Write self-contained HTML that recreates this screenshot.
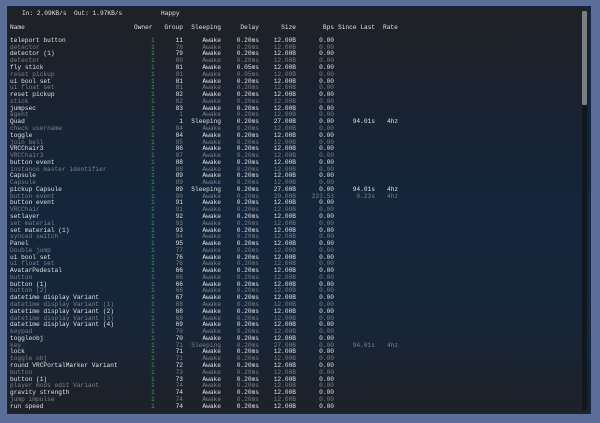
<!DOCTYPE html>
<html><head><meta charset="utf-8"><style>
html,body{margin:0;padding:0}
body{width:600px;height:423px;background:#5b6e98;position:relative;overflow:hidden;font-family:"Liberation Mono",monospace;font-size:6.2px}
.p{position:absolute;left:7px;top:6px;width:584px;height:408px;border:1px solid #0f2a46;box-sizing:border-box;background:linear-gradient(#1f2124 0%,#1a2230 20%,#13263b 50%,#17263a 75%,#1d2128 100%)}
.sb{position:absolute;left:582px;top:11px;width:5px;height:399px;background:#12171e;border-radius:2px}
.th{position:absolute;left:582px;top:11px;width:5px;height:94px;background:#7a7c80;border-radius:1px}
.r{position:absolute;left:0;width:600px;height:7px;line-height:7px;white-space:pre;color:#7b8088}
.b{color:#dfe1e4}
.r span{position:absolute;top:0}
.n{left:10px}
.o{left:151px;color:#3aa03a!important}
.g{right:417px}
.s{right:379px}
.d{right:341px}
.z{right:304px}
.bp{right:266px}
.sl{right:225px}
.rt{left:387px}
.h{color:#dfe1e4}
</style></head><body>
<div class="p"></div>
<div class="sb"></div><div class="th"></div>
<div class="r h" style="top:10px"><span style="left:22px">In: 2.09KB/s  Out: 1.97KB/s</span><span style="left:161px">Happy</span></div>
<div class="r h" style="top:24px"><span class="n">Name</span><span style="left:134px">Owner</span><span class="g">Group</span><span class="s">Sleeping</span><span class="d">Delay</span><span class="z">Size</span><span class="bp">Bps</span><span style="left:338px">Since Last</span><span style="left:383px">Rate</span></div>
<div class="r b" style="top:37px"><span class="n">teleport button</span><span class="o">1</span><span class="g">11</span><span class="s">Awake</span><span class="d">0.20ms</span><span class="z">12.00B</span><span class="bp">0.00</span></div>
<div class="r" style="top:44px"><span class="n">detector</span><span class="o">1</span><span class="g">78</span><span class="s">Awake</span><span class="d">0.20ms</span><span class="z">12.00B</span><span class="bp">0.00</span></div>
<div class="r b" style="top:50px"><span class="n">detector (1)</span><span class="o">1</span><span class="g">79</span><span class="s">Awake</span><span class="d">0.20ms</span><span class="z">12.00B</span><span class="bp">0.00</span></div>
<div class="r" style="top:57px"><span class="n">detector</span><span class="o">1</span><span class="g">80</span><span class="s">Awake</span><span class="d">0.20ms</span><span class="z">12.00B</span><span class="bp">0.00</span></div>
<div class="r b" style="top:64px"><span class="n">fly stick</span><span class="o">1</span><span class="g">81</span><span class="s">Awake</span><span class="d">0.05ms</span><span class="z">12.00B</span><span class="bp">0.00</span></div>
<div class="r" style="top:71px"><span class="n">reset pickup</span><span class="o">1</span><span class="g">81</span><span class="s">Awake</span><span class="d">0.05ms</span><span class="z">12.00B</span><span class="bp">0.00</span></div>
<div class="r b" style="top:78px"><span class="n">ui bool set</span><span class="o">1</span><span class="g">81</span><span class="s">Awake</span><span class="d">0.20ms</span><span class="z">12.00B</span><span class="bp">0.00</span></div>
<div class="r" style="top:84px"><span class="n">ui float set</span><span class="o">1</span><span class="g">81</span><span class="s">Awake</span><span class="d">0.20ms</span><span class="z">12.00B</span><span class="bp">0.00</span></div>
<div class="r b" style="top:91px"><span class="n">reset pickup</span><span class="o">1</span><span class="g">82</span><span class="s">Awake</span><span class="d">0.20ms</span><span class="z">12.00B</span><span class="bp">0.00</span></div>
<div class="r" style="top:98px"><span class="n">stick</span><span class="o">1</span><span class="g">82</span><span class="s">Awake</span><span class="d">0.20ms</span><span class="z">12.00B</span><span class="bp">0.00</span></div>
<div class="r b" style="top:105px"><span class="n">jumpsec</span><span class="o">1</span><span class="g">83</span><span class="s">Awake</span><span class="d">0.20ms</span><span class="z">12.00B</span><span class="bp">0.00</span></div>
<div class="r" style="top:111px"><span class="n">agent</span><span class="o">1</span><span class="g">1</span><span class="s">Awake</span><span class="d">0.20ms</span><span class="z">12.00B</span><span class="bp">0.00</span></div>
<div class="r b" style="top:118px"><span class="n">Quad</span><span class="o">1</span><span class="g">1</span><span class="s">Sleeping</span><span class="d">0.20ms</span><span class="z">27.00B</span><span class="bp">0.00</span><span class="sl">94.01s</span><span class="rt">4hz</span></div>
<div class="r" style="top:125px"><span class="n">check username</span><span class="o">1</span><span class="g">84</span><span class="s">Awake</span><span class="d">0.20ms</span><span class="z">12.00B</span><span class="bp">0.00</span></div>
<div class="r b" style="top:132px"><span class="n">toggle</span><span class="o">1</span><span class="g">84</span><span class="s">Awake</span><span class="d">0.20ms</span><span class="z">12.00B</span><span class="bp">0.00</span></div>
<div class="r" style="top:139px"><span class="n">join bell</span><span class="o">1</span><span class="g">85</span><span class="s">Awake</span><span class="d">0.20ms</span><span class="z">12.00B</span><span class="bp">0.00</span></div>
<div class="r b" style="top:145px"><span class="n">VRCChair3</span><span class="o">1</span><span class="g">86</span><span class="s">Awake</span><span class="d">0.20ms</span><span class="z">12.00B</span><span class="bp">0.00</span></div>
<div class="r" style="top:152px"><span class="n">VRCChair3</span><span class="o">1</span><span class="g">87</span><span class="s">Awake</span><span class="d">0.20ms</span><span class="z">12.00B</span><span class="bp">0.00</span></div>
<div class="r b" style="top:159px"><span class="n">button event</span><span class="o">1</span><span class="g">88</span><span class="s">Awake</span><span class="d">0.20ms</span><span class="z">12.00B</span><span class="bp">0.00</span></div>
<div class="r" style="top:166px"><span class="n">instance master identifier</span><span class="o">1</span><span class="g">88</span><span class="s">Awake</span><span class="d">0.20ms</span><span class="z">12.00B</span><span class="bp">0.00</span></div>
<div class="r b" style="top:172px"><span class="n">Capsule</span><span class="o">1</span><span class="g">89</span><span class="s">Awake</span><span class="d">0.20ms</span><span class="z">12.00B</span><span class="bp">0.00</span></div>
<div class="r" style="top:179px"><span class="n">Capsule</span><span class="o">1</span><span class="g">89</span><span class="s">Awake</span><span class="d">0.20ms</span><span class="z">12.00B</span><span class="bp">0.00</span></div>
<div class="r b" style="top:186px"><span class="n">pickup Capsule</span><span class="o">1</span><span class="g">89</span><span class="s">Sleeping</span><span class="d">0.20ms</span><span class="z">27.00B</span><span class="bp">0.00</span><span class="sl">94.01s</span><span class="rt">4hz</span></div>
<div class="r" style="top:193px"><span class="n">button event</span><span class="o">1</span><span class="g">90</span><span class="s">Awake</span><span class="d">0.20ms</span><span class="z">20.00B</span><span class="bp">223.53</span><span class="sl">0.23s</span><span class="rt">4hz</span></div>
<div class="r b" style="top:199px"><span class="n">button event</span><span class="o">1</span><span class="g">91</span><span class="s">Awake</span><span class="d">0.20ms</span><span class="z">12.00B</span><span class="bp">0.00</span></div>
<div class="r" style="top:206px"><span class="n">VRCChair</span><span class="o">1</span><span class="g">91</span><span class="s">Awake</span><span class="d">0.20ms</span><span class="z">12.00B</span><span class="bp">0.00</span></div>
<div class="r b" style="top:213px"><span class="n">setlayer</span><span class="o">1</span><span class="g">92</span><span class="s">Awake</span><span class="d">0.20ms</span><span class="z">12.00B</span><span class="bp">0.00</span></div>
<div class="r" style="top:220px"><span class="n">set material</span><span class="o">1</span><span class="g">93</span><span class="s">Awake</span><span class="d">0.20ms</span><span class="z">12.00B</span><span class="bp">0.00</span></div>
<div class="r b" style="top:227px"><span class="n">set material (1)</span><span class="o">1</span><span class="g">93</span><span class="s">Awake</span><span class="d">0.20ms</span><span class="z">12.00B</span><span class="bp">0.00</span></div>
<div class="r" style="top:233px"><span class="n">synced switch</span><span class="o">1</span><span class="g">94</span><span class="s">Awake</span><span class="d">0.20ms</span><span class="z">12.00B</span><span class="bp">0.00</span></div>
<div class="r b" style="top:240px"><span class="n">Panel</span><span class="o">1</span><span class="g">95</span><span class="s">Awake</span><span class="d">0.20ms</span><span class="z">12.00B</span><span class="bp">0.00</span></div>
<div class="r" style="top:247px"><span class="n">Double jump</span><span class="o">1</span><span class="g">77</span><span class="s">Awake</span><span class="d">0.20ms</span><span class="z">12.00B</span><span class="bp">0.00</span></div>
<div class="r b" style="top:254px"><span class="n">ui bool set</span><span class="o">1</span><span class="g">76</span><span class="s">Awake</span><span class="d">0.20ms</span><span class="z">12.00B</span><span class="bp">0.00</span></div>
<div class="r" style="top:260px"><span class="n">ui float set</span><span class="o">1</span><span class="g">76</span><span class="s">Awake</span><span class="d">0.20ms</span><span class="z">12.00B</span><span class="bp">0.00</span></div>
<div class="r b" style="top:267px"><span class="n">AvatarPedestal</span><span class="o">1</span><span class="g">66</span><span class="s">Awake</span><span class="d">0.20ms</span><span class="z">12.00B</span><span class="bp">0.00</span></div>
<div class="r" style="top:274px"><span class="n">button</span><span class="o">1</span><span class="g">66</span><span class="s">Awake</span><span class="d">0.20ms</span><span class="z">12.00B</span><span class="bp">0.00</span></div>
<div class="r b" style="top:281px"><span class="n">button (1)</span><span class="o">1</span><span class="g">66</span><span class="s">Awake</span><span class="d">0.20ms</span><span class="z">12.00B</span><span class="bp">0.00</span></div>
<div class="r" style="top:287px"><span class="n">button (2)</span><span class="o">1</span><span class="g">66</span><span class="s">Awake</span><span class="d">0.20ms</span><span class="z">12.00B</span><span class="bp">0.00</span></div>
<div class="r b" style="top:294px"><span class="n">datetime display Variant</span><span class="o">1</span><span class="g">67</span><span class="s">Awake</span><span class="d">0.20ms</span><span class="z">12.00B</span><span class="bp">0.00</span></div>
<div class="r" style="top:301px"><span class="n">datetime display Variant (1)</span><span class="o">1</span><span class="g">68</span><span class="s">Awake</span><span class="d">0.20ms</span><span class="z">12.00B</span><span class="bp">0.00</span></div>
<div class="r b" style="top:308px"><span class="n">datetime display Variant (2)</span><span class="o">1</span><span class="g">68</span><span class="s">Awake</span><span class="d">0.20ms</span><span class="z">12.00B</span><span class="bp">0.00</span></div>
<div class="r" style="top:315px"><span class="n">datetime display Variant (3)</span><span class="o">1</span><span class="g">68</span><span class="s">Awake</span><span class="d">0.20ms</span><span class="z">12.00B</span><span class="bp">0.00</span></div>
<div class="r b" style="top:321px"><span class="n">datetime display Variant (4)</span><span class="o">1</span><span class="g">69</span><span class="s">Awake</span><span class="d">0.20ms</span><span class="z">12.00B</span><span class="bp">0.00</span></div>
<div class="r" style="top:328px"><span class="n">keypad</span><span class="o">1</span><span class="g">70</span><span class="s">Awake</span><span class="d">0.20ms</span><span class="z">12.00B</span><span class="bp">0.00</span></div>
<div class="r b" style="top:335px"><span class="n">toggleobj</span><span class="o">1</span><span class="g">70</span><span class="s">Awake</span><span class="d">0.20ms</span><span class="z">12.00B</span><span class="bp">0.00</span></div>
<div class="r" style="top:342px"><span class="n">key</span><span class="o">1</span><span class="g">71</span><span class="s">Sleeping</span><span class="d">0.20ms</span><span class="z">27.00B</span><span class="bp">0.00</span><span class="sl">94.01s</span><span class="rt">4hz</span></div>
<div class="r b" style="top:348px"><span class="n">lock</span><span class="o">1</span><span class="g">71</span><span class="s">Awake</span><span class="d">0.20ms</span><span class="z">12.00B</span><span class="bp">0.00</span></div>
<div class="r" style="top:355px"><span class="n">toggle obj</span><span class="o">1</span><span class="g">71</span><span class="s">Awake</span><span class="d">0.20ms</span><span class="z">12.00B</span><span class="bp">0.00</span></div>
<div class="r b" style="top:362px"><span class="n">round VRCPortalMarker Variant</span><span class="o">1</span><span class="g">72</span><span class="s">Awake</span><span class="d">0.20ms</span><span class="z">12.00B</span><span class="bp">0.00</span></div>
<div class="r" style="top:369px"><span class="n">button</span><span class="o">1</span><span class="g">73</span><span class="s">Awake</span><span class="d">0.20ms</span><span class="z">12.00B</span><span class="bp">0.00</span></div>
<div class="r b" style="top:376px"><span class="n">button (1)</span><span class="o">1</span><span class="g">73</span><span class="s">Awake</span><span class="d">0.20ms</span><span class="z">12.00B</span><span class="bp">0.00</span></div>
<div class="r" style="top:382px"><span class="n">player mods edit Variant</span><span class="o">1</span><span class="g">74</span><span class="s">Awake</span><span class="d">0.20ms</span><span class="z">12.00B</span><span class="bp">0.00</span></div>
<div class="r b" style="top:389px"><span class="n">gravity strength</span><span class="o">1</span><span class="g">74</span><span class="s">Awake</span><span class="d">0.20ms</span><span class="z">12.00B</span><span class="bp">0.00</span></div>
<div class="r" style="top:396px"><span class="n">jump impulse</span><span class="o">1</span><span class="g">74</span><span class="s">Awake</span><span class="d">0.20ms</span><span class="z">12.00B</span><span class="bp">0.00</span></div>
<div class="r b" style="top:403px"><span class="n">run speed</span><span class="o">1</span><span class="g">74</span><span class="s">Awake</span><span class="d">0.20ms</span><span class="z">12.00B</span><span class="bp">0.00</span></div>
</body></html>
